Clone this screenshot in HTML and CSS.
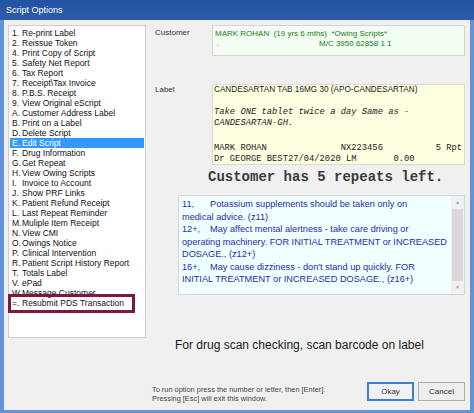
FILE: index.html
```html
<!DOCTYPE html>
<html>
<head>
<meta name="viewport" content="width=device-width, initial-scale=1">
<title>Script Options</title>
<link rel="stylesheet" href="styles.css">
</head>
<body>
  <div class="window">
    <div class="titlebar">Script Options</div>
    <div class="body">
      <div class="listbox">
        <div class="item"><span class="key">1.</span>Re-print Label</div>
        <div class="item"><span class="key">2.</span>Reissue Token</div>
        <div class="item"><span class="key">4.</span>Print Copy of Script</div>
        <div class="item"><span class="key">5.</span>Safety Net Report</div>
        <div class="item"><span class="key">6.</span>Tax Report</div>
        <div class="item"><span class="key">7.</span>Receipt\Tax Invoice</div>
        <div class="item"><span class="key">8.</span>P.B.S. Receipt</div>
        <div class="item"><span class="key">9.</span>View Original eScript</div>
        <div class="item"><span class="key">A.</span>Customer Address Label</div>
        <div class="item"><span class="key">B.</span>Print on a Label</div>
        <div class="item"><span class="key">D.</span>Delete Script</div>
        <div class="item selected"><span class="key">E.</span>Edit Script</div>
        <div class="item"><span class="key">F.</span>Drug Information</div>
        <div class="item"><span class="key">G.</span>Get Repeat</div>
        <div class="item"><span class="key">H.</span>View Owing Scripts</div>
        <div class="item"><span class="key">I.</span>Invoice to Account</div>
        <div class="item"><span class="key">J.</span>Show PRF Links</div>
        <div class="item"><span class="key">K.</span>Patient Refund Receipt</div>
        <div class="item"><span class="key">L.</span>Last Repeat Reminder</div>
        <div class="item"><span class="key">M.</span>Muliple Item Receipt</div>
        <div class="item"><span class="key">N.</span>View CMI</div>
        <div class="item"><span class="key">O.</span>Owings Notice</div>
        <div class="item"><span class="key">P.</span>Clinical Intervention</div>
        <div class="item"><span class="key">R.</span>Patient Script History Report</div>
        <div class="item"><span class="key">T.</span>Totals Label</div>
        <div class="item"><span class="key">V.</span>ePad</div>
        <div class="item"><span class="key">W.</span>Message Customer</div>
        <div class="item"><span class="key">=.</span>Resubmit PDS Transaction</div>
        <div class="pds-mark"></div>
      </div>

      <div class="main">
        <div class="field-row">
          <div class="field-label">Customer</div>
          <div class="customer-box">
            <div>MARK ROHAN&nbsp; (19 yrs 6 mths)&nbsp; *Owing Scripts*</div>
            <div class="customer-line2"><span class="dot">.</span><span>M/C 3950 62858 1 1</span></div>
          </div>
        </div>

        <div class="field-row label-row">
          <div class="field-label">Label</div>
          <div class="label-box">
            <div class="drug-name">CANDESARTAN TAB 16MG 30 (APO-CANDESARTAN)</div>
            <div class="directions">Take ONE tablet twice a day Same as -
CANDESARTAN-GH.</div>
            <div class="label-foot">MARK ROHAN              NX223456          5 Rpt
Dr GEORGE BEST27/04/2020 LM       0.00</div>
          </div>
        </div>

        <div class="repeats">Customer has 5 repeats left.</div>

        <div class="warnings">
          <div class="warnings-text">
            <div><span class="code">11,</span>Potassium supplements should be taken only on</div>
            <div>medical advice. (z11)</div>
            <div><span class="code">12+,</span>May affect mental alertness - take care driving or</div>
            <div>operating machinery. FOR INITIAL TREATMENT or INCREASED</div>
            <div>DOSAGE., (z12+)</div>
            <div><span class="code">16+,</span>May cause dizziness - don't stand up quickly. FOR</div>
            <div>INITIAL TREATMENT or INCREASED DOSAGE., (z16+)</div>
          </div>
          <div class="scrollbar">
            <div class="arrow">&#9650;</div>
            <div class="thumb"></div>
            <div class="arrow">&#9660;</div>
          </div>
        </div>

        <div class="scan-note">For drug scan checking, scan barcode on label</div>

        <div class="footer">
          <div class="hint">To run option press the number or letter, then [Enter].<br>Pressing [Esc] will exit this window.</div>
          <button class="btn btn-default">Okay</button>
          <button class="btn">Cancel</button>
        </div>
      </div>
    </div>
  </div>
</body>
</html>
```

FILE: styles.css
```css
html, body {
  margin: 0;
  padding: 0;
}

body {
  font-family: "Liberation Sans", Arial, sans-serif;
  background: #4d7fcc;
}

.window {
  width: 474px;
  height: 413px;
  box-sizing: border-box;
  display: flex;
  flex-direction: column;
  background: #5f93da;
  padding: 0 4px 3px 4px;
}

.titlebar {
  height: 20px;
  margin: 0 -4px;
  padding-left: 6px;
  line-height: 21px;
  font-size: 9px;
  color: #ffffff;
  background: linear-gradient(#2252a2, #2c5cab);
}

.body {
  flex: 1;
  display: flex;
  gap: 6px;
  padding: 5px 5px 0 4px;
  background: #f0f0f0;
}

/* option list */
.listbox {
  position: relative;
  width: 138px;
  height: 313px;
  box-sizing: border-box;
  padding: 2px 1px;
  background: #ffffff;
  border: 1px solid #cfcfcf;
  font-size: 8.5px;
  color: #111111;
}

.item {
  height: 10px;
  line-height: 10px;
  padding-left: 2px;
  white-space: nowrap;
}

.item .key {
  display: inline-block;
  min-width: 10px;
}

.item.selected {
  background: #3399ff;
  color: #ffffff;
}

.pds-mark {
  position: absolute;
  left: -1px;
  top: 268px;
  width: 127px;
  height: 19px;
  box-sizing: border-box;
  border: 3px solid #7b1744;
}

/* right side */
.main {
  width: 313px;
  display: flex;
  flex-direction: column;
}

.field-row {
  display: flex;
}

.field-label {
  width: 57px;
  padding: 3px 0 0 3px;
  font-size: 8px;
  color: #333333;
}

.customer-box {
  flex: 1;
  height: 31px;
  box-sizing: border-box;
  padding: 3px 2px 0 2px;
  background: #f2fff2;
  border: 1px solid #d4d4d4;
  font-size: 8px;
  line-height: 10px;
  color: #1c7a22;
}

.customer-line2 {
  display: flex;
}

.customer-line2 .dot {
  width: 102px;
  padding-left: 2px;
}

.label-row {
  margin-top: 28px;
}

.label-row .field-label {
  padding-top: 1px;
}

.label-box {
  flex: 1;
  height: 81px;
  box-sizing: border-box;
  padding: 0 0 0 1px;
  background: #ffffe1;
  border: 1px solid #dadada;
  color: #222222;
}

.drug-name {
  font-size: 8.2px;
  line-height: 10px;
}

.directions,
.label-foot {
  font-family: "Liberation Mono", "Courier New", monospace;
  font-size: 8.8px;
  line-height: 11px;
  white-space: pre;
}

.directions {
  margin-top: 12px;
  font-style: italic;
}

.label-foot {
  margin-top: 14px;
}

.repeats {
  margin: 4px 0 0 56px;
  font-family: "Liberation Mono", "Courier New", monospace;
  font-weight: bold;
  font-size: 14px;
  line-height: 16px;
  color: #3a3a3a;
}

/* warnings */
.warnings {
  display: flex;
  margin: 10px 0 0 26px;
  height: 100px;
  box-sizing: border-box;
  background: #f0ffff;
  border: 1px solid #cfd8dc;
}

.warnings-text {
  flex: 1;
  padding: 2px 0 0 3px;
  font-size: 9.2px;
  line-height: 12.5px;
  color: #2b2ba8;
  white-space: nowrap;
}

.warnings-text .code {
  display: inline-block;
  width: 28px;
}

.scrollbar {
  width: 13px;
  display: flex;
  flex-direction: column;
  background: #f0f0f0;
}

.scrollbar .arrow {
  height: 13px;
  line-height: 13px;
  text-align: center;
  font-size: 5px;
  color: #a6a6a6;
}

.scrollbar .thumb {
  flex: 1;
  margin: 0 1px;
  background: #dadada;
}

.scan-note {
  margin: 43px 0 0 23px;
  font-size: 12px;
  line-height: 14px;
  color: #1a1a1a;
}

/* footer */
.footer {
  display: flex;
  align-items: flex-start;
  margin-top: 30px;
}

.hint {
  flex: 1;
  padding-top: 3px;
  font-size: 7.4px;
  line-height: 9px;
  color: #444444;
}

.btn {
  width: 47px;
  height: 19px;
  margin-left: 4px;
  padding: 0;
  font-family: "Liberation Sans", Arial, sans-serif;
  font-size: 8px;
  color: #333333;
  background: #eeeeee;
  border: 1px solid #adadad;
}

.btn-default {
  margin-left: 0;
  border: 2px solid #3b7fd4;
  background: #f2f2f2;
}
```
